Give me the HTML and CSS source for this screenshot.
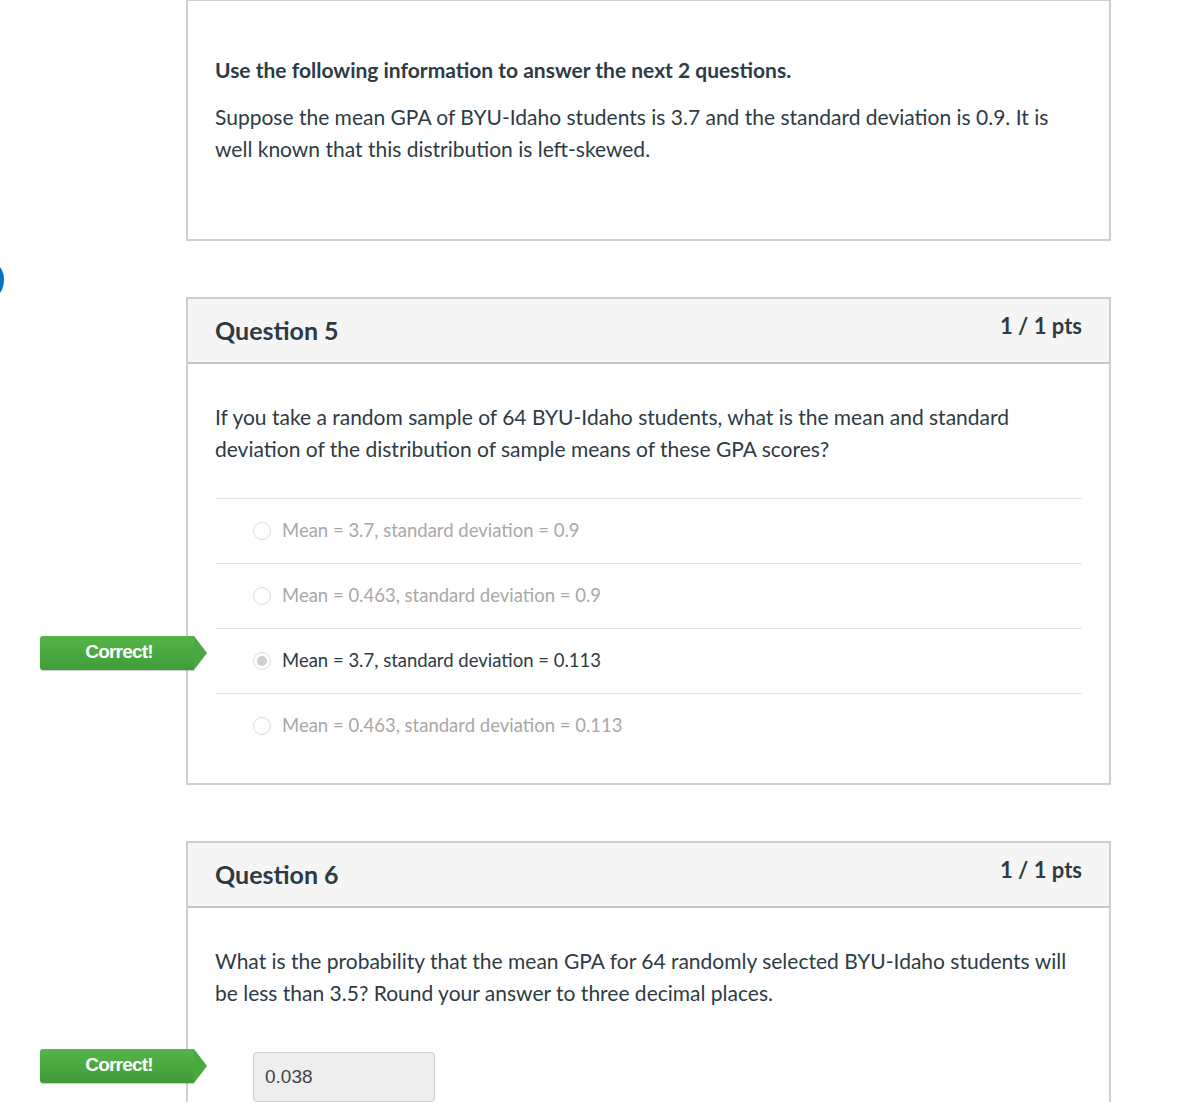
FILE: index.html
```html
<!DOCTYPE html>
<html>
<head>
<meta charset="utf-8">
<link rel="stylesheet" href="styles.css">
</head>
<body>
<div class="edge-dot"></div>
<div class="page">
  <div class="info-box">
    <p class="lead">Use the following information to answer the next 2 questions.</p>
    <p>Suppose the mean GPA of BYU-Idaho students is 3.7 and the standard deviation is 0.9. It is well known that this distribution is left-skewed.</p>
  </div>

  <div class="question">
    <div class="q-header">
      <span class="q-title">Question 5</span>
      <span class="q-pts">1 / 1 pts</span>
    </div>
    <div class="q-body">
      <p class="q-text">If you take a random sample of 64 BYU-Idaho students, what is the mean and standard deviation of the distribution of sample means of these GPA scores?</p>
      <div class="answers">
        <div class="answer"><span class="radio"></span><span class="a-text">Mean = 3.7, standard deviation = 0.9</span></div>
        <div class="answer"><span class="radio"></span><span class="a-text">Mean = 0.463, standard deviation = 0.9</span></div>
        <div class="answer selected"><span class="badge badge-mc">Correct!</span><span class="radio"></span><span class="a-text">Mean = 3.7, standard deviation = 0.113</span></div>
        <div class="answer"><span class="radio"></span><span class="a-text">Mean = 0.463, standard deviation = 0.113</span></div>
      </div>
    </div>
  </div>

  <div class="question">
    <div class="q-header">
      <span class="q-title">Question 6</span>
      <span class="q-pts">1 / 1 pts</span>
    </div>
    <div class="q-body">
      <p class="q-text">What is the probability that the mean GPA for 64 randomly selected BYU-Idaho students will be less than 3.5? Round your answer to three decimal places.</p>
      <div class="fill">
        <span class="badge badge-fill">Correct!</span>
        <div class="fill-input">0.038</div>
      </div>
    </div>
  </div>
</div>
</body>
</html>
```

FILE: styles.css
```css
html, body {
  margin: 0;
  padding: 0;
  background: #ffffff;
}
body {
  font-family: Lato, "Open Sans", sans-serif;
  color: #2d3b45;
  overflow: hidden;
  height: 1113px;
  position: relative;
}
.edge-dot {
  position: absolute;
  left: -10px;
  top: 266px;
  width: 14px;
  height: 28px;
  border-radius: 50%;
  background: #0a72c4;
}
.page {
  margin-left: 186px;
  width: 925px;
}
p { margin: 0; }

.info-box {
  border: 2px solid #cfcfcf;
  border-width: 1px 2px 2px 2px;
  padding: 53px 27px 74px 27px;
  font-size: 21px;
  line-height: 32px;
}
.info-box .lead {
  font-weight: 700;
  font-size: 21px;
  margin-bottom: 15px;
}

.question {
  position: relative;
  margin-top: 56px;
  border: 2px solid #cfcfcf;
  border-bottom: 0;
}
.q-header {
  background: #f5f5f5;
  border-bottom: 2px solid #c4c4c4;
  height: 63px;
  display: flex;
  justify-content: space-between;
  padding: 0 27px;
}
.q-title {
  font-size: 25px;
  font-weight: 700;
  line-height: 62px;
}
.q-pts {
  font-size: 22px;
  font-weight: 700;
  line-height: 54px;
}
.q-body {
  padding: 37px 27px 0 27px;
}
.q-text {
  font-size: 21px;
  line-height: 32px;
}
.answers {
  margin-top: 33px;
  padding-bottom: 25px;
  border-bottom: 2px solid #cfcfcf;
  margin-left: -27px;
  margin-right: -27px;
  padding-left: 27px;
  padding-right: 27px;
}
.answer {
  position: relative;
  height: 64px;
  border-top: 1px solid #e4e4e4;
  display: flex;
  align-items: center;
  padding-left: 38px;
  font-size: 18.5px;
  color: #a8a8a8;
}
.answer.selected { color: #2d3b45; }
.radio {
  width: 16px;
  height: 16px;
  border: 1px solid #dcdcdc;
  border-radius: 50%;
  margin-right: 11px;
  box-sizing: content-box;
  position: relative;
  background: #fff;
}
.selected .radio::after {
  content: "";
  position: absolute;
  left: 3px;
  top: 3px;
  width: 10px;
  height: 10px;
  border-radius: 50%;
  background: #cfcfcf;
}
.a-text { margin-top: -2px; }

.badge {
  position: absolute;
  width: 154px;
  height: 34px;
  line-height: 31px;
  background: linear-gradient(#55b548, #3f9b38);
  border-radius: 3px 0 0 3px;
  color: #fff;
  font-family: "Liberation Sans", Arial, sans-serif;
  font-weight: 700;
  font-size: 19px;
  letter-spacing: -0.8px;
  text-align: center;
  text-indent: 4px;
  box-shadow: 0 1px 1px rgba(0,0,0,0.2);
}
.badge::after {
  content: "";
  position: absolute;
  right: -13px;
  top: 0;
  border-left: 13px solid #4aa840;
  border-top: 17px solid transparent;
  border-bottom: 17px solid transparent;
}
.badge-mc { top: 7px; left: -175px; }
.fill {
  position: relative;
  margin-top: 43px;
  padding-left: 38px;
}
.badge-fill { top: -3px; left: -175px; }
.fill-input {
  width: 169px;
  height: 48px;
  background: #eeeeee;
  border: 1px solid #cccccc;
  border-radius: 4px;
  padding-left: 11px;
  font-family: "Liberation Sans", Arial, sans-serif;
  font-size: 19px;
  line-height: 48px;
  color: #444;
}
```
